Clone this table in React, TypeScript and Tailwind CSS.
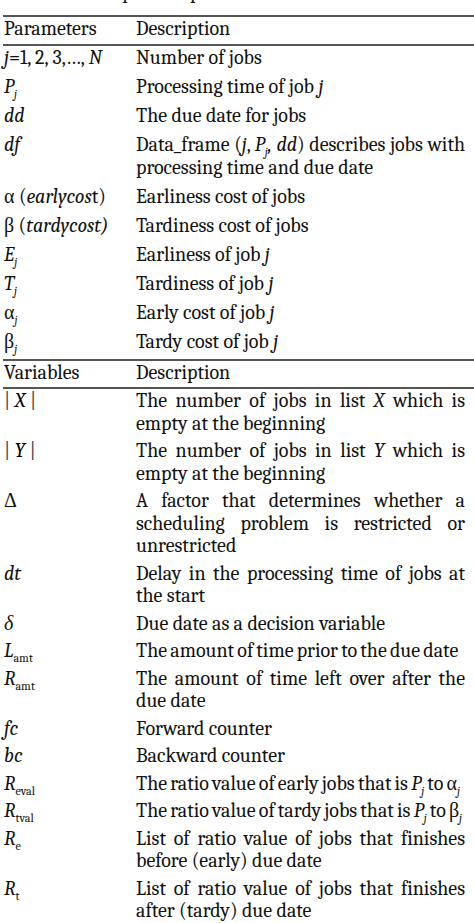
import type { ReactNode } from 'react'

// sub-index drawn small and low, like the typeset table
const Sub = ({ children, it = false }: { children: ReactNode; it?: boolean }) => (
  <span className={`relative top-[5px] text-[12px] leading-none ${it ? 'italic' : ''}`}>{children}</span>
)

const Rule = () => <div className="ml-[3px] h-[2px] bg-[#555555]" />

type Item = { left: ReactNode; right: ReactNode; squeeze?: boolean }

function Row({ left, right, squeeze, pad }: Item & { pad: string }) {
  return (
    <div className={`grid grid-cols-[132px_1fr] pl-[4px] pr-[9px] leading-[22.5px] ${pad}`}>
      <div>{left}</div>
      <div className={squeeze ? 'text-justify [word-spacing:-1.2px]' : 'text-justify'}>{right}</div>
    </div>
  )
}

const params: Item[] = [
  { left: <><i>j</i>=1, 2, 3,…, <i>N</i></>, right: 'Number of jobs' },
  { left: <><i>P</i><Sub it>j</Sub></>, right: <>Processing time of job <i>j</i></> },
  { left: <i>dd</i>, right: 'The due date for jobs' },
  { left: <i>df</i>, right: <>Data_frame (<i>j</i>, <i>P<Sub it>j</Sub>, dd</i>) describes jobs with processing time and due date</> },
  { left: <>α (<i>earlycos</i>t)</>, right: 'Earliness cost of jobs' },
  { left: <>β (<i>tardycost)</i></>, right: 'Tardiness cost of jobs' },
  { left: <><i>E</i><Sub it>j</Sub></>, right: <>Earliness of job <i>j</i></> },
  { left: <><i>T</i><Sub it>j</Sub></>, right: <>Tardiness of job <i>j</i></> },
  { left: <>α<Sub it>j</Sub></>, right: <>Early cost of job <i>j</i></> },
  { left: <>β<Sub it>j</Sub></>, right: <>Tardy cost of job <i>j</i></> },
]

const vars: Item[] = [
  { left: <span className="text-[#444]">| <i className="text-black">X</i> |</span>, right: <>The number of jobs in list <i>X</i> which is empty at the beginning</> },
  { left: <span className="text-[#444]">| <i className="text-black">Y</i> |</span>, right: <>The number of jobs in list <i>Y</i> which is empty at the beginning</> },
  { left: 'Δ', right: 'A factor that determines whether a scheduling problem is restricted or unrestricted' },
  { left: <i>dt</i>, right: 'Delay in the processing time of jobs at the start' },
  { left: <i>δ</i>, right: 'Due date as a decision variable' },
  { left: <><i>L</i><Sub>amt</Sub></>, right: 'The amount of time prior to the due date', squeeze: true },
  { left: <><i>R</i><Sub>amt</Sub></>, right: 'The amount of time left over after the due date' },
  { left: <i>fc</i>, right: 'Forward counter' },
  { left: <i>bc</i>, right: 'Backward counter' },
  { left: <><i>R</i><Sub>eval</Sub></>, right: <>The ratio value of early jobs that is <i>P</i><Sub it>j</Sub> to α<Sub it>j</Sub></>, squeeze: true },
  { left: <><i>R</i><Sub>tval</Sub></>, right: <>The ratio value of tardy jobs that is <i>P</i><Sub it>j</Sub> to β<Sub it>j</Sub></>, squeeze: true },
  { left: <><i>R</i><Sub>e</Sub></>, right: 'List of ratio value of jobs that finishes before (early) due date' },
  { left: <><i>R</i><Sub>t</Sub></>, right: 'List of ratio value of jobs that finishes after (tardy) due date' },
]

export default function App() {
  return (
    <div className="w-[474px] h-[923px] overflow-hidden bg-white text-[20px] text-[#111] font-serif [font-family:Liberation_Serif,Times_New_Roman,serif]">
      {/* caption sits above the crop, only its descenders show */}
      <div className="h-[15px] overflow-hidden pl-[8px]">
        <div className="-mt-[19px] leading-[23px]">Table 1. Description of parameters and variables</div>
      </div>
      <Rule />
      <Row left="Parameters" right="Description" pad="pt-[1px] pb-[3.5px]" />
      <Rule />
      {params.map((p, i) => (
        <Row key={i} {...p} pad="pt-[1px] pb-[5.5px]" />
      ))}
      <Rule />
      <Row left="Variables" right="Description" pad="pt-[1px] pb-[3px]" />
      <Rule />
      {vars.map((v, i) => (
        <Row key={i} {...v} pad="pt-[1px] pb-[4px]" />
      ))}
    </div>
  )
}
